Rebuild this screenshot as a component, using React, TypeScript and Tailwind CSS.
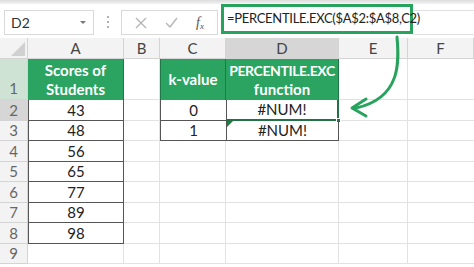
import React from 'react'

// Excel-style sheet: PERCENTILE.EXC returning #NUM! for k = 0 and 1
const COLS = [
  { id: 'A', w: 'w-[96px]' },
  { id: 'B', w: 'w-[36px]' },
  { id: 'C', w: 'w-[66px]' },
  { id: 'D', w: 'w-[113px]' },
  { id: 'E', w: 'w-[69px]' },
  { id: 'F', w: 'w-[66px]' },
]

const scores = ['43', '48', '56', '65', '77', '89', '98']
const kValues = ['0', '1']

const font = { fontFamily: 'Lato, "Open Sans", sans-serif' }

function RowHeader({ n, tall, active }: { n: number; tall?: boolean; active?: boolean }) {
  return (
    <div
      className={`w-[28px] shrink-0 flex justify-center border-r border-b border-[#d4d4d4] text-[15px] text-[#666] ${
        tall ? 'items-end pb-0 bg-[#cfe3d5]' : 'items-center'
      } ${active ? 'bg-[#d6d6d6]' : tall ? '' : 'bg-[#f3f3f3]'}`}
    >
      {n}
    </div>
  )
}

export default function App() {
  return (
    <div className="relative w-[474px] h-[267px] overflow-hidden bg-white" style={font}>
      {/* window chrome strip */}
      <div className="h-[4px] bg-gradient-to-b from-[#dcdcdc] to-[#f4f4f4]" />

      {/* formula bar */}
      <div className="h-[34px] flex items-start">
        <div className="ml-[4px] mt-[6px] w-[90px] h-[25px] border border-[#d9d9d9] flex items-center justify-between pl-[6px] pr-[6px]">
          <span className="text-[14px] text-[#333]">D2</span>
          <svg width="8" height="5" viewBox="0 0 8 5">
            <path d="M1 1 L4 4 L7 1 Z" fill="#777" />
          </svg>
        </div>
        <div className="w-[27px] mt-[12px] flex flex-col items-center gap-[3px]">
          <span className="w-[2px] h-[2px] bg-[#999] rounded-full" />
          <span className="w-[2px] h-[2px] bg-[#999] rounded-full" />
          <span className="w-[2px] h-[2px] bg-[#999] rounded-full" />
        </div>
        <div className="mt-[6px] w-[97px] h-[25px] border border-[#d9d9d9] flex items-center justify-around px-[4px]">
          <svg width="12" height="12" viewBox="0 0 12 12">
            <path d="M1 1 L11 11 M11 1 L1 11" stroke="#b5b5b5" strokeWidth="1.4" />
          </svg>
          <svg width="13" height="11" viewBox="0 0 13 11">
            <path d="M1 6 L5 10 L12 1" stroke="#b5b5b5" strokeWidth="1.4" fill="none" />
          </svg>
          <span className="text-[14px] italic text-[#555]" style={{ fontFamily: '"Liberation Serif", serif' }}>
            f<sub className="text-[9px]">x</sub>
          </span>
        </div>
        <div className="ml-[3px] w-[192px] h-[30px] border-[3px] border-[#27a35e] flex items-center pl-[3px]">
          <span className="text-[13px] text-[#222] tracking-[-0.3px] whitespace-nowrap">
            =PERCENTILE.EXC($A$2:$A$8,C2)
          </span>
        </div>
        <div className="flex-1 mt-[6px] h-[25px] border-t border-b border-[#e0e0e0]" />
      </div>

      {/* column headers */}
      <div className="flex h-[21px]">
        <div className="w-[28px] shrink-0 relative bg-[#f3f3f3] border-r border-b border-[#d4d4d4]">
          <svg className="absolute right-[2px] bottom-[2px]" width="14" height="14" viewBox="0 0 14 14">
            <path d="M14 0 L14 14 L0 14 Z" fill="#d0d0d0" />
          </svg>
        </div>
        {COLS.map(c => (
          <div
            key={c.id}
            className={`${c.w} shrink-0 flex items-center justify-center text-[15px] text-[#444] border-r border-b border-[#d4d4d4] ${
              c.id === 'D' ? 'bg-[#d6d6d6]' : 'bg-[#f3f3f3]'
            }`}
          >
            {c.id}
          </div>
        ))}
      </div>

      {/* row 1: green headers */}
      <div className="flex h-[41px]">
        <RowHeader n={1} tall />
        <div className="w-[96px] shrink-0 bg-[#2aa460] text-white font-bold text-[15px] leading-[19px] flex flex-col items-center justify-center border-r border-[#1d7a46]">
          <span>Scores of</span>
          <span>Students</span>
        </div>
        <div className="w-[36px] shrink-0 border-r border-b border-[#e2e2e2]" />
        <div className="w-[66px] shrink-0 bg-[#2aa460] text-white font-bold text-[15px] flex items-center justify-center border-l border-r border-[#1d7a46]">
          k-value
        </div>
        <div className="w-[113px] shrink-0 bg-[#2aa460] text-white font-bold text-[14px] leading-[19px] flex flex-col items-center justify-center border-r border-[#1d7a46]">
          <span className="tracking-[-0.4px] whitespace-nowrap">PERCENTILE.EXC</span>
          <span className="text-[15px]">function</span>
        </div>
        <div className="w-[69px] shrink-0 border-r border-b border-[#e2e2e2]" />
        <div className="w-[66px] shrink-0 border-b border-[#e2e2e2]" />
      </div>

      {/* rows 2-9 */}
      {Array.from({ length: 8 }).map((_, i) => {
        const score = scores[i]
        const k = kValues[i]
        const rowNo = i + 2
        return (
          <div key={rowNo} className="flex h-[20.5px]">
            <RowHeader n={rowNo} active={rowNo === 2} />
            <div
              className={`w-[96px] shrink-0 flex items-center justify-center text-[15px] text-[#222] ${
                score ? 'border-l border-r border-b border-[#555]' : 'border-r border-b border-[#e2e2e2]'
              }`}
            >
              {score}
            </div>
            <div className="w-[36px] shrink-0 border-r border-b border-[#e2e2e2]" />
            <div
              className={`w-[66px] shrink-0 flex items-center justify-center text-[15px] text-[#222] ${
                k ? 'border-l border-b border-[#555]' : 'border-r border-b border-[#e2e2e2]'
              }`}
            >
              {k}
            </div>
            <div
              className={`relative w-[113px] shrink-0 flex items-center justify-center text-[15px] text-[#222] ${
                rowNo === 2
                  ? 'border-l border-r-2 border-b-2 border-l-[#555] border-r-[#217346] border-b-[#217346]'
                  : k
                    ? 'border-l border-r border-b border-[#555]'
                    : 'border-r border-b border-[#e2e2e2]'
              }`}
            >
              {k ? '#NUM!' : ''}
              {rowNo === 2 && (
                <span className="absolute right-[-4px] bottom-[-4px] w-[5px] h-[5px] bg-[#217346] border border-white" />
              )}
              {rowNo === 3 && (
                <svg className="absolute left-0 top-0" width="6" height="6" viewBox="0 0 6 6">
                  <path d="M0 0 L6 0 L0 6 Z" fill="#1e7a3e" />
                </svg>
              )}
            </div>
            <div className="w-[69px] shrink-0 border-r border-b border-[#e2e2e2]" />
            <div className="w-[66px] shrink-0 border-b border-[#e2e2e2]" />
          </div>
        )
      })}

      {/* annotation arrow from formula to D2 */}
      <svg className="absolute left-0 top-0 pointer-events-none" width="474" height="267" viewBox="0 0 474 267">
        <path d="M397 37 C 399 60, 402 98, 356 108" stroke="#27a35e" strokeWidth="3" fill="none" strokeLinecap="round" />
        <path d="M366 99 L 352 108 L 366 116" stroke="#27a35e" strokeWidth="3" fill="none" strokeLinecap="round" strokeLinejoin="round" />
      </svg>
    </div>
  )
}
